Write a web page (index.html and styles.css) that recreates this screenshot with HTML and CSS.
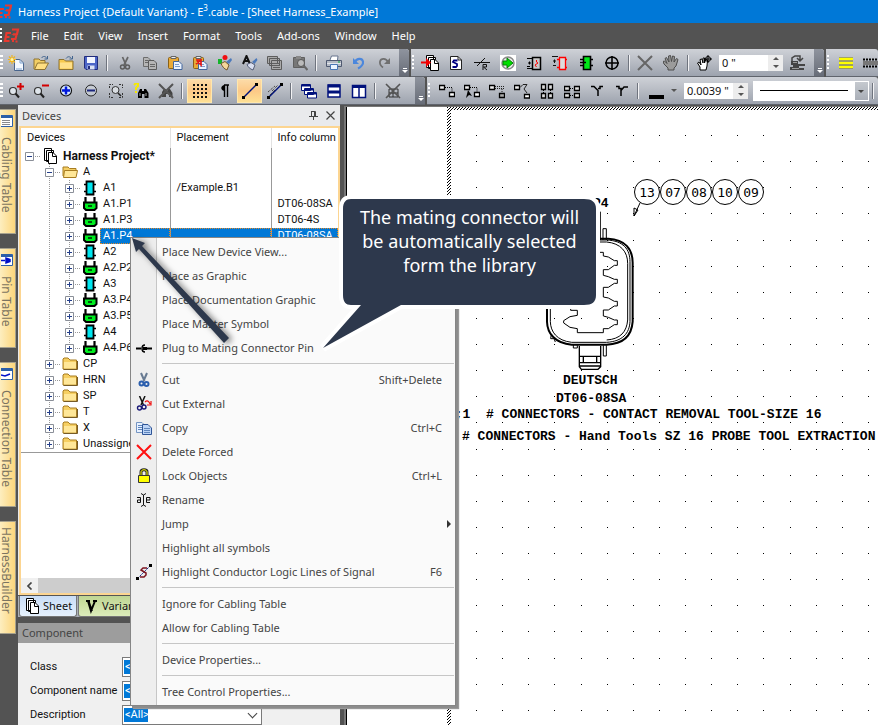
FILE: index.html
```html
<!DOCTYPE html>
<html lang="en">
<head>
<meta charset="utf-8">
<title>Harness Project - E3.cable</title>
<link rel="stylesheet" href="styles.css">
</head>
<body>
<svg class="sprite" aria-hidden="true">
  <symbol id="logo" viewBox="0 0 18 16"><path d="M8 5H3.500L2 13H6.500M3 9H6.500" fill="none" stroke="#e8392f" stroke-width="2.200"/><path d="M9 1.500H15L14 6L12 6.500L13.500 7L12.500 11H8M10 6.300H13" fill="none" stroke="#e8392f" stroke-width="2.200"/><path d="M9 13H11M12.500 13.500H14.500" stroke="#e8392f" stroke-width="2"/></symbol>
  <symbol id="new" viewBox="0 0 16 16"><path d="M6.500 4.500H12L15.500 8V15.500H6.500Z" fill="#f4f9ff" stroke="#48648c"/><path d="M12 4.500V8H15.500M8 14H14" fill="none" stroke="#7ea3cf"/><path d="M4 0V9M0 4.500H8M1 1.500L7 7.500M7 1.500L1 7.500" stroke="#f0b51e" stroke-width="1.200"/><circle cx="4" cy="4.500" r="1.500" fill="#fff6a5"/></symbol>
  <symbol id="open" viewBox="0 0 16 16"><path d="M1 14V4H6L7.500 5.500H12V8" fill="#f3cf65" stroke="#8d7232"/><path d="M1.500 14.500L4.500 8H15.500L12 14.500Z" fill="#ffdf82" stroke="#8d7232"/><path d="M8.500 3C10 .800 12.500 1 14 3.500M14.500 1V4H11.500" fill="none" stroke="#42648e"/></symbol>
  <symbol id="close" viewBox="0 0 16 16"><path d="M1 14.500V4.500H6L7.500 6H15V14.500Z" fill="#f6c94f" stroke="#8d7232"/><path d="M2 7.500H14V13.500H2Z" fill="#ffe08a"/><path d="M8 3.500C10 .800 12 1.500 13.500 3.500M14.500 1V4H11.500" fill="none" stroke="#42648e"/></symbol>
  <symbol id="save" viewBox="0 0 16 16"><path d="M1.500 1.500H14.500V14.500H3L1.500 13Z" fill="#4d66c8" stroke="#222d7c"/><path d="M4 2H12V8H4Z" fill="#f3f6ff"/><path d="M4.500 10.500H11.500V14.500H4.500Z" fill="#dce2f4"/><path d="M6 11V14" stroke="#222d7c" stroke-width="2"/></symbol>
  <symbol id="cutg" viewBox="0 0 16 16"><path d="M5.500 2L9 10M11 2L7 10" stroke="#666" stroke-width="1.700"/><circle cx="5.500" cy="12" r="2" fill="none" stroke="#5c5c5c" stroke-width="1.500"/><circle cx="10.500" cy="12" r="2" fill="none" stroke="#5c5c5c" stroke-width="1.500"/></symbol>
  <symbol id="cut" viewBox="0 0 16 16"><path d="M5 1L8.500 9M11 1L7.500 9" stroke="#687b92" stroke-width="2"/><circle cx="5.500" cy="11.500" r="2" fill="none" stroke="#2b5fae" stroke-width="2"/><circle cx="10.500" cy="12" r="2" fill="none" stroke="#2b5fae" stroke-width="2"/></symbol>
  <symbol id="cutx" viewBox="0 0 16 16"><path d="M3.500 0L7.500 9M9 0L5 9" stroke="#111" stroke-width="1.500"/><circle cx="3.500" cy="12" r="2" fill="none" stroke="#181877" stroke-width="1.400"/><circle cx="8" cy="11" r="2" fill="none" stroke="#181877" stroke-width="1.400"/><path d="M9 6C11 4 13 5 14 8M15 5V9H11" fill="none" stroke="#f01212" stroke-width="1.200"/></symbol>
  <symbol id="copyg" viewBox="0 0 16 16"><path d="M1.500 2.500H6L8.500 5V11.500H1.500Z" fill="#b5b5b5" stroke="#6d6d6d"/><path d="M6.500 5.500H12L14.500 8V14.500H6.500Z" fill="#b5b5b5" stroke="#5a5a5a"/><path d="M3 5.500H6M3 7.500H6M8 9.500H13M8 11.500H13" stroke="#666"/></symbol>
  <symbol id="copy" viewBox="0 0 16 16"><path d="M.500 2.500H6L8.500 5V12.500H.500Z" fill="#e7f1ff" stroke="#7595c3"/><path d="M6.500 4.500H12L15.500 8V14.500H6.500Z" fill="#bcd4f6" stroke="#2f5597"/><path d="M2 5.500H6M2 7.500H6M2 9.500H6M8 8.500H14M8 10.500H14M8 12.500H14" stroke="#5f86bd"/></symbol>
  <symbol id="paste" viewBox="0 0 16 16"><rect x="1.500" y="2.500" width="10" height="11" rx="1" fill="#e9a936" stroke="#8a6115"/><path d="M4 3.500V1.500H9V3.500Z" fill="#eee" stroke="#666"/><path d="M6.500 6.500H12L15 9.500V14.500H6.500Z" fill="#eaf3ff" stroke="#42659c"/><path d="M8 9.500H12M8 11.500H13" stroke="#7f9cc9"/></symbol>
  <symbol id="pastex" viewBox="0 0 16 16"><use href="#paste"/><path d="M4 5H9M9 4V10L5 6M4 9L9 5" stroke="#e01818" stroke-width="1.700" fill="none"/></symbol>
  <symbol id="brush" viewBox="0 0 16 16"><circle cx="8" cy="2.500" r="2.500" fill="#f01010"/><path d="M1 4H5V9H1Z" fill="#14b52b"/><path d="M9 7L14 3L15 5L12 9Z" fill="#4c79bb"/><path d="M5 8L8 6.500L12 10L10 15C7 14 5 11 4 8.500Z" fill="#f4d79b" stroke="#72582c"/></symbol>
  <symbol id="abrush" viewBox="0 0 16 16"><path d="M1 9L4.500 1L8 9M2.500 6H7" fill="none" stroke="#111" stroke-width="2"/><path d="M10 7L14.500 3L15.500 5L12.500 9Z" fill="#4c79bb"/><path d="M6 9L9 7.500L13 10L11 15C8 14 6 12 5 9.500Z" fill="#d9dff0" stroke="#555e78"/></symbol>
  <symbol id="stack" viewBox="0 0 16 16"><path d="M.500 1.500H10.500V8.500H.500ZM2.500 3.500H12.500V10.500H2.500ZM4.500 5.500H14.500V14.500H4.500Z" fill="#aaa" stroke="#5c5c5c"/><path d="M6 8.500H13M6 10.500H13M6 12.500H13" stroke="#606060"/></symbol>
  <symbol id="camera" viewBox="0 0 16 16"><path d="M1.500 2.500H12.500V12.500H1.500Z" fill="#777" stroke="#606060"/><path d="M4 1H9V4H4Z" fill="#888"/><circle cx="9" cy="8" r="3.500" fill="#bbb" stroke="#555"/><path d="M12 11L15.500 15" stroke="#666" stroke-width="2"/></symbol>
  <symbol id="print" viewBox="0 0 16 16"><path d="M4 5L5.500 1H12L11.500 5" fill="#fff" stroke="#67758e"/><path d="M.500 5.500H15.500V11.500H.500Z" fill="#b4bac4" stroke="#4d5870"/><path d="M1 8.500H15" stroke="#e4e7ec"/><path d="M4.500 9.500H11.500V14.500H4.500Z" fill="#eaf4ff" stroke="#4977b5"/><path d="M12 7H14" stroke="#00a436"/></symbol>
  <symbol id="undo" viewBox="0 0 16 16"><path d="M4 7C6 3 11 3 12 6.500C12.500 9 10 12 7 13.500" fill="none" stroke="#4c87dc" stroke-width="2.200"/><path d="M2 3V9H8Z" fill="#4c87dc"/></symbol>
  <symbol id="redo" viewBox="0 0 16 16"><path d="M12 7C10 3 5 3 4 6.500C3.500 9 5 11 7 12.500" fill="none" stroke="#707070" stroke-width="1.800"/><path d="M14 3V9H8Z" fill="#707070"/></symbol>
  <symbol id="sheets" viewBox="0 0 16 16"><path d="M2.500 .500H9.500V12.500H2.500ZM4.500 2.500H11.500V13.500H4.500Z" fill="#fff" stroke="#000"/><path d="M6.500 4.500H11L14.500 8V15.500H6.500Z" fill="#fff" stroke="#000"/><path d="M10.500 5V8.500H14" fill="none" stroke="#000"/></symbol>
  <symbol id="insheet" viewBox="0 0 18 16"><path d="M5.500 .500H12.500V12.500H5.500ZM7.500 2.500H14.500V13.500H7.500Z" fill="#fff" stroke="#000"/><path d="M9.500 4.500H14L17.500 8V15.500H9.500Z" fill="#fff" stroke="#000"/><path d="M13.500 5V8.500H17" fill="none" stroke="#000"/><path d="M0 6.500H5V3L10 7.500L5 12V8.500H0Z" fill="#f00000"/></symbol>
  <symbol id="spage" viewBox="0 0 16 16"><path d="M2.500 1.500H10L13.500 5V14.500H2.500Z" fill="#fff" stroke="#222"/><path d="M10 1.500V5H13.500" fill="none" stroke="#222"/><path d="M9.500 5.500H6L5 7L9 9V11L8 12H4.500" fill="none" stroke="#000080" stroke-width="1.800"/></symbol>
  <symbol id="slash" viewBox="0 0 16 16"><path d="M0 7.500H16M3 11L11 3M9 15V9.500H12.500V12H9.500L13 15" fill="none" stroke="#111"/></symbol>
  <symbol id="goto" viewBox="0 0 16 16"><path d="M0 0H16V16H0Z" fill="#fff"/><circle cx="8" cy="8" r="6" fill="#eee" stroke="#8b8b8b" stroke-width="1.500"/><path d="M3 6H7V3L13 8L7 13V10H3Z" fill="#00df00" stroke="#078007"/></symbol>
  <symbol id="devk" viewBox="0 0 16 16"><path d="M6.500 2.500H14.500V14.500H6.500Z" fill="#c8c8c8" stroke="#000" stroke-width="1.500"/><path d="M1 3.500H6M1 13.500H6M2 8H5M3.500 6.500V9.500M1 11.500H4" stroke="#000"/><path d="M10.500 5V7L12 8L9 10L10.500 12" fill="none" stroke="#f00"/></symbol>
  <symbol id="devr" viewBox="0 0 16 16"><path d="M7.500 2.500H13.500V14.500H7.500ZM5 4.500H8M13 4.500H15M5 12.500H8M13 12.500H15" fill="#ddd" stroke="#f00" stroke-width="1.300"/><path d="M0 1.500H6M1 6H4M2.500 4.500V8M1 10.500H4" stroke="#111"/></symbol>
  <symbol id="devg" viewBox="0 0 16 16"><path d="M5.500 1.500H12.500V14.500H5.500Z" fill="#00e719" stroke="#000" stroke-width="1.600"/><path d="M2 4.500H5M2 10.500H5M13 4.500H15M13 10.500H15M2 7.500H8" stroke="#000" stroke-width="1.400"/></symbol>
  <symbol id="target" viewBox="0 0 16 16"><circle cx="8" cy="8" r="6" fill="none" stroke="#000" stroke-width="1.500"/><path d="M8 1V15M1 8H15" stroke="#000" stroke-width="1.600"/></symbol>
  <symbol id="xg" viewBox="0 0 16 16"><path d="M1 1L15 15M15 1L1 15" stroke="#666" stroke-width="2"/></symbol>
  <symbol id="xr" viewBox="0 0 16 16"><path d="M1 1L15 15M15 1L1 15" stroke="#ff1010" stroke-width="2"/></symbol>
  <symbol id="hand" viewBox="0 0 16 16"><path d="M5 15V13L1 9L0 6.500L1.500 6L4 8.500L2 3.500L3.500 2.500L6 7L5.500 1L7.500 .500L8.500 6.500L9.500 1L11.500 1.500L11 7L13.500 3.500L15 4.500L13 11L11 13V15Z" fill="currentColor" stroke="#4c4c4c"/></symbol>
  <symbol id="handt" viewBox="0 0 16 16"><path d="M4 15V12L1.500 8L3 7L5 10L4 4.500L6 4L7 8V3H8.500V8L10 4L11.500 5L11 11L10 15Z" fill="#fff" stroke="#000"/><circle cx="12" cy="4" r="2.500" fill="none" stroke="#000"/><path d="M12 0V8M8 4H16" stroke="#000"/></symbol>
  <symbol id="rotate" viewBox="0 0 16 16"><path d="M3 6V3L6 1H11V5M8 3L11 6L14 3" fill="none" stroke="#444" stroke-width="1.500"/><path d="M2 6H9V9H16V11H10V13H15V15H1V12H4V10H2Z" fill="#444"/><path d="M3 13.500H10M4 7.500H8" stroke="#999"/></symbol>
  <symbol id="ylines" viewBox="0 0 16 16"><path d="M1 4H15M1 8H15M1 12H15" stroke="#858500" stroke-width="3"/><path d="M1 4H15M1 8H15M1 12H15" stroke="#ffff00" stroke-width="2"/></symbol>
  <symbol id="dashes" viewBox="0 0 16 16"><path d="M0 4.500H16M0 11.500H16" stroke="#000" stroke-width="2" stroke-dasharray="2 1"/><path d="M0 8H16" stroke="#777" stroke-width="4"/></symbol>
  <symbol id="zin" viewBox="0 0 16 16"><circle cx="5" cy="8" r="3.500" fill="#dfe5eb" stroke="#333" stroke-width="1.200"/><path d="M7.500 10.500L11 14.500" stroke="#222" stroke-width="2"/><path d="M9 3.500H16M12.500 0V7" stroke="#d30000" stroke-width="2"/></symbol>
  <symbol id="zout" viewBox="0 0 16 16"><circle cx="5" cy="8" r="3.500" fill="#dfe5eb" stroke="#333" stroke-width="1.200"/><path d="M7.500 10.500L11 14.500" stroke="#222" stroke-width="2"/><path d="M9 2.500H16" stroke="#d30000" stroke-width="2"/></symbol>
  <symbol id="plusc" viewBox="0 0 16 16"><circle cx="8" cy="7.500" r="5.500" fill="#d7e8ff" stroke="#111" stroke-width="1.200"/><path d="M8 3.500V11.500M4 7.500H12" stroke="#0018da" stroke-width="2.500"/></symbol>
  <symbol id="minusc" viewBox="0 0 16 16"><circle cx="8" cy="7.500" r="5.500" fill="#c6cbd2" stroke="#222"/><path d="M4 7.500H12" stroke="#1b267d" stroke-width="2"/></symbol>
  <symbol id="zarea" viewBox="0 0 16 16"><path d="M1.500 5V1.500H5M11 1.500H14.500V5M14.500 10V14.500H11M5 14.500H1.500V10" fill="none" stroke="#333" stroke-dasharray="2 1"/><circle cx="7.500" cy="7" r="3.500" fill="#d8dce1" stroke="#333"/><path d="M10 10L13 13" stroke="#222" stroke-width="1.500"/></symbol>
  <symbol id="find" viewBox="0 0 16 16"><path d="M1 2L2.500 .500H5V3L3 5V7M3 8V10" fill="none" stroke="#f5e900" stroke-width="2"/><path d="M5 15V10L7 6H9V8H11V6H13L15.500 10V15H11.500V11H9V15Z" fill="#000"/><path d="M7 10V13M13 10V13" stroke="#aaa"/></symbol>
  <symbol id="findx" viewBox="0 0 16 16"><path d="M4 14V9L6 6H8V8H10V6H12L14.500 10V14H11V11H8V14Z" fill="#444"/><path d="M1 1L15 15M15 1L1 15" stroke="#555" stroke-width="2"/></symbol>
  <symbol id="grid" viewBox="0 0 16 16"><path d="M1 2H15M1 6H15M1 10H15M1 14H15" stroke="#111" stroke-width="2" stroke-dasharray="2 2"/></symbol>
  <symbol id="para" viewBox="0 0 16 16"><path d="M7 2H12M7.500 2V14M10.500 2V14" fill="none" stroke="#000" stroke-width="1.400"/><path d="M8 2V8C3 8 3 2 8 2Z"/></symbol>
  <symbol id="line" viewBox="0 0 16 16"><path d="M2 14L14 2" stroke="#00117c" stroke-width="1.400"/><path d="M0 13H3V16H0ZM13 0H16V3H13Z"/></symbol>
  <symbol id="line2" viewBox="0 0 16 16"><path d="M2 14L14 2" stroke="#00117c" stroke-width="1.400"/><path d="M1 9L8 3M5 8L11 2M3 12L8 7" stroke="#222" stroke-dasharray="1 1"/><path d="M0 13H3V16H0ZM13 0H16V3H13Z"/></symbol>
  <symbol id="cascade" viewBox="0 0 16 16"><path d="M.500 1.500H9.500V7.500H.500ZM3.500 5.500H12.500V11.500H3.500ZM6.500 9.500H15.500V15H6.500Z" fill="#fff" stroke="#00117c"/><path d="M1 2.500H9M4 6.500H12M7 10.500H15" stroke="#00117c" stroke-width="2"/></symbol>
  <symbol id="horiz" viewBox="0 0 16 16"><path d="M2 2H14V14H2Z" fill="#fff" stroke="#00117c" stroke-width="1.500"/><path d="M2 3H14M2 9H14" stroke="#00117c" stroke-width="3"/></symbol>
  <symbol id="vert" viewBox="0 0 16 16"><path d="M1.500 2.500H14.500V14.500H1.500ZM8 3V14" fill="#fff" stroke="#00117c" stroke-width="1.500"/><path d="M1 3.500H15" stroke="#00117c" stroke-width="3"/></symbol>
  <symbol id="tableX" viewBox="0 0 16 16"><path d="M4 6H13V14H4ZM4 10H13M8 6V14" fill="none" stroke="#333"/><path d="M1 1L15 15M15 1L1 15" stroke="#555" stroke-width="1.600"/></symbol>
  <symbol id="route1" viewBox="0 0 16 16"><path d="M.500 2.500H5.500V6.500H.500Z" fill="#eee" stroke="#000" stroke-width="1.300"/><path d="M6 4.500H13V9" fill="none" stroke="#000" stroke-dasharray="1 1"/><path d="M10.500 9.500H15.500V13.500H10.500Z" fill="#fff" stroke="#000" stroke-width="1.300"/></symbol>
  <symbol id="route2" viewBox="0 0 16 16"><use href="#route1"/><path d="M2 15L4 7L8 13L5 12Z"/></symbol>
  <symbol id="route3" viewBox="0 0 16 16"><path d="M.500 2.500H5.500V6.500H.500Z" fill="#eee" stroke="#000" stroke-width="1.300"/><path d="M6 3.500H15M6 5.500H15M13 6V10" fill="none" stroke="#222" stroke-dasharray="1 1"/><path d="M10.500 10.500H15.500V14.500H10.500Z" fill="#aaa" stroke="#000" stroke-width="1.300"/></symbol>
  <symbol id="route4" viewBox="0 0 16 16"><path d="M.500 2.500H5.500V6.500H.500Z" fill="#eee" stroke="#000" stroke-width="1.300"/><path d="M6 4.500L9 1.500H13L10 6L13 10" fill="none" stroke="#222"/><path d="M10.500 11.500H15.500V15H10.500Z" fill="#fff" stroke="#000" stroke-width="1.300"/></symbol>
  <symbol id="pairv" viewBox="0 0 16 16"><path d="M2.500 1.500H6.500V6.500H2.500ZM9.500 1.500H13.500V6.500H9.500ZM2.500 10.500H6.500V15H2.500ZM9.500 10.500H13.500V15H9.500Z" fill="#ddd" stroke="#000" stroke-width="1.300"/><path d="M4.500 7V10M11.500 7V10" stroke="#000" stroke-dasharray="1 1"/></symbol>
  <symbol id="pairh" viewBox="0 0 16 16"><path d="M.500 3.500H5.500V7.500H.500ZM10.500 3.500H15.500V7.500H10.500ZM.500 10.500H5.500V14.500H.500ZM10.500 10.500H15.500V14.500H10.500Z" fill="#ddd" stroke="#000" stroke-width="1.300"/><path d="M6 5.500H10M6 12.500H10" stroke="#000" stroke-dasharray="1 1"/></symbol>
  <symbol id="teel" viewBox="0 0 16 16"><path d="M2 3.500H5L9 7.500V13M9 5.500H11V3.500H14" fill="none" stroke="#000" stroke-width="1.500"/></symbol>
  <symbol id="teer" viewBox="0 0 16 16"><path d="M2 3.500H5V5.500H7V13M7 7.500L10 4H14" fill="none" stroke="#000" stroke-width="1.500"/></symbol>
  <symbol id="penw" viewBox="0 0 16 16"><path d="M1 12H16V16H1Z"/></symbol>
  <symbol id="folder" viewBox="0 0 16 16"><path d="M1 13V3L2 2H6L8 4H14.500V13Z" fill="#f6cf62" stroke="#a77c21"/><path d="M2 6H14V12.500H2Z" fill="#ffe798"/><path d="M1.500 13.500H15.500V5" fill="none" stroke="#765b26"/></symbol>
  <symbol id="folderopen" viewBox="0 0 16 16"><path d="M1 12V3H6L7.500 4.500H14V12" fill="#f5cf65" stroke="#a77c21"/><path d="M1.500 13.500L2.500 6.500H15.500L14 13.500Z" fill="#ffe798" stroke="#a77c21"/></symbol>
  <symbol id="dev" viewBox="0 0 16 16"><path d="M4.500 1.500H11.500V14.500H4.500Z" fill="#00e6f0" stroke="#000" stroke-width="1.800"/><path d="M2 4.500H5M2 11.500H5M11 4.500H14M11 11.500H14" stroke="#000" stroke-width="1.500"/></symbol>
  <symbol id="conn" viewBox="0 0 16 16"><path d="M3.500 1V6M12.500 1V6" stroke="#000" stroke-width="2.200"/><path d="M2 6.500H14.500V12L12.500 14H4L2 12Z" fill="#00ed20" stroke="#000" stroke-width="2"/><path d="M6 10H10" stroke="#000" stroke-width="1.300"/></symbol>
  <symbol id="plus" viewBox="0 0 9 9"><path d="M.500 .500H8.500V8.500H.500Z" fill="#fff" stroke="#8a8f98"/><path d="M2 4.500H7M4.500 2V7" stroke="#243f8b"/></symbol>
  <symbol id="minus" viewBox="0 0 9 9"><path d="M.500 .500H8.500V8.500H.500Z" fill="#fff" stroke="#8a8f98"/><path d="M2 4.500H7" stroke="#243f8b"/></symbol>
  <symbol id="plug" viewBox="0 0 16 16"><path d="M0 8.500H5M9 8.500H16" stroke="#000" stroke-width="2"/><path d="M9 5C5 5 5 12 9 12" fill="none" stroke="#000" stroke-width="1.500"/><path d="M7 7H11V10H7Z"/></symbol>
  <symbol id="lock" viewBox="0 0 16 16"><path d="M5 8V4C5 1 11 1 11 4V8" fill="none" stroke="#222" stroke-width="3"/><path d="M5 8V4C5 1 11 1 11 4V8" fill="none" stroke="#ffff00" stroke-width="1"/><path d="M2.500 7.500H13.500V14.500H2.500Z" fill="#ffff00" stroke="#333"/></symbol>
  <symbol id="rename" viewBox="0 0 16 16"><path d="M1 5.500H4.500V10.500H1.500V8H4.500M10.500 8H14V5.500H10.500V10.500H14" fill="none" stroke="#111"/><path d="M5 1.500L7.500 3L10 1.500M5 14.500L7.500 13L10 14.500M7.500 3V13" fill="none" stroke="#111"/></symbol>
  <symbol id="signal" viewBox="0 0 16 16"><path d="M2 14L14 2" stroke="#00117c" stroke-dasharray="2 1"/><path d="M11 4H7L5 6L10 9V11L8 13H4" fill="none" stroke="#7c1520" stroke-width="1.500"/><path d="M0 13H3V16H0ZM13 0H16V3H13Z"/></symbol>
  <symbol id="listwin" viewBox="0 0 12 12"><path d="M-2 .500H11.500V11.500H-2Z" fill="#fff" stroke="#2c5fa8"/><path d="M0 2H11" stroke="#2c5fa8" stroke-width="2"/><path d="M1 5.500H9M1 7.500H9M1 9.500H9" stroke="#87898d"/></symbol>
  <symbol id="pinwin" viewBox="0 0 12 12"><path d="M-2 .500H11.500V11.500H-2Z" fill="#fff" stroke="#2c5fa8"/><path d="M0 2H11" stroke="#2c5fa8" stroke-width="2"/><path d="M0 6.500H4M5 4V9L9 7.500V5.500Z" fill="#0010c8" stroke="#0010c8" stroke-width="1.500"/></symbol>
  <symbol id="conwin" viewBox="0 0 12 12"><path d="M-2 .500H11.500V11.500H-2Z" fill="#fff" stroke="#2c5fa8"/><path d="M0 2H11" stroke="#2c5fa8" stroke-width="2"/><path d="M0 7L4 8L9 6" fill="none" stroke="#0010c8" stroke-width="1.500"/></symbol>
</svg>

<header class="titlebar"><svg class="logo"><use href="#logo"/></svg><h1>Harness Project {Default Variant} - E<sup>3</sup>.cable - [Sheet Harness_Example]</h1></header>

<nav class="menubar">
  <i class="grip"></i><svg class="logo"><use href="#logo"/></svg>
  <button>File</button><button>Edit</button><button>View</button><button>Insert</button><button>Format</button><button>Tools</button><button>Add-ons</button><button>Window</button><button>Help</button>
</nav>

<div class="toolrow">
  <div class="toolbar main">
    <i class="grip"></i>
    <button aria-label="New"><svg><use href="#new"/></svg></button>
    <button aria-label="Open"><svg><use href="#open"/></svg></button>
    <button aria-label="Close"><svg><use href="#close"/></svg></button>
    <button aria-label="Save"><svg><use href="#save"/></svg></button>
    <i class="sep"></i>
    <button aria-label="Cut"><svg><use href="#cutg"/></svg></button>
    <button aria-label="Copy"><svg><use href="#copyg"/></svg></button>
    <button aria-label="Paste"><svg><use href="#paste"/></svg></button>
    <button aria-label="Paste special"><svg><use href="#pastex"/></svg></button>
    <button aria-label="Format painter"><svg><use href="#brush"/></svg></button>
    <button aria-label="Text painter"><svg><use href="#abrush"/></svg></button>
    <button aria-label="Copy sheets"><svg><use href="#stack"/></svg></button>
    <button aria-label="Snapshot"><svg><use href="#camera"/></svg></button>
    <i class="sep"></i>
    <button aria-label="Print"><svg><use href="#print"/></svg></button>
    <button aria-label="Undo"><svg><use href="#undo"/></svg></button>
    <button aria-label="Redo"><svg><use href="#redo"/></svg></button>
    <button class="more" aria-label="Toolbar options"></button>
  </div>
  <div class="toolbar insert">
    <i class="grip"></i>
    <button aria-label="Insert sheet"><svg class="wide"><use href="#insheet"/></svg></button>
    <button aria-label="Symbol"><svg><use href="#spage"/></svg></button>
    <button aria-label="Connection"><svg><use href="#slash"/></svg></button>
    <button aria-label="Go to"><svg><use href="#goto"/></svg></button>
    <button aria-label="Device"><svg><use href="#devk"/></svg></button>
    <button aria-label="Device block"><svg><use href="#devr"/></svg></button>
    <button aria-label="Place device"><svg><use href="#devg"/></svg></button>
    <button aria-label="Target"><svg><use href="#target"/></svg></button>
    <i class="sep"></i>
    <button aria-label="Delete"><svg><use href="#xg"/></svg></button>
    <button class="grey" aria-label="Pan"><svg><use href="#hand"/></svg></button>
    <i class="sep"></i>
    <button aria-label="Move"><svg><use href="#handt"/></svg></button>
    <span class="spin"><input aria-label="Angle" value="0 &quot;"><span class="steps"><button aria-label="Increase angle"></button><button class="down" aria-label="Decrease angle"></button></span></span>
    <button aria-label="Rotate"><svg><use href="#rotate"/></svg></button>
    <button class="more" aria-label="Toolbar options"></button>
  </div>
  <div class="toolbar rest">
    <i class="grip"></i>
    <button aria-label="Wires"><svg><use href="#ylines"/></svg></button>
    <button aria-label="Cable"><svg><use href="#dashes"/></svg></button>
  </div>
</div>

<div class="toolrow">
  <div class="toolbar view">
    <i class="grip"></i>
    <button aria-label="Zoom in"><svg><use href="#zin"/></svg></button>
    <button aria-label="Zoom out"><svg><use href="#zout"/></svg></button>
    <button aria-label="Enlarge"><svg><use href="#plusc"/></svg></button>
    <button aria-label="Reduce"><svg><use href="#minusc"/></svg></button>
    <button aria-label="Zoom area"><svg><use href="#zarea"/></svg></button>
    <button aria-label="Find"><svg><use href="#find"/></svg></button>
    <button aria-label="Clear find"><svg><use href="#findx"/></svg></button>
    <i class="sep"></i>
    <button class="on" aria-label="Grid"><svg><use href="#grid"/></svg></button>
    <button aria-label="Marks"><svg><use href="#para"/></svg></button>
    <button class="on" aria-label="Line"><svg><use href="#line"/></svg></button>
    <button aria-label="Multiple lines"><svg><use href="#line2"/></svg></button>
    <i class="sep"></i>
    <button aria-label="Cascade"><svg><use href="#cascade"/></svg></button>
    <button aria-label="Tile rows"><svg><use href="#horiz"/></svg></button>
    <button aria-label="Tile columns"><svg><use href="#vert"/></svg></button>
    <i class="sep"></i>
    <button aria-label="Remove table"><svg><use href="#tableX"/></svg></button>
    <button class="more" aria-label="Toolbar options"></button>
  </div>
  <div class="toolbar rest">
    <i class="grip"></i>
    <button aria-label="Route"><svg><use href="#route1"/></svg></button>
    <button aria-label="Pick route"><svg><use href="#route2"/></svg></button>
    <button aria-label="Bundle route"><svg><use href="#route3"/></svg></button>
    <button aria-label="Curve route"><svg><use href="#route4"/></svg></button>
    <button aria-label="Vertical pairs"><svg><use href="#pairv"/></svg></button>
    <button aria-label="Horizontal pairs"><svg><use href="#pairh"/></svg></button>
    <button aria-label="Left tee"><svg><use href="#teel"/></svg></button>
    <button aria-label="Right tee"><svg><use href="#teer"/></svg></button>
    <i class="sep"></i>
    <button aria-label="Pen colour"><svg><use href="#penw"/></svg></button>
    <button class="caret" aria-label="Pen colours"></button>
    <span class="spin"><input aria-label="Line width" value="0.0039 &quot;"><span class="steps"><button aria-label="Increase width"></button><button class="down" aria-label="Decrease width"></button></span></span>
    <span class="linepick"><select aria-label="Line style"><option></option></select></span>
    <i class="sep"></i>
  </div>
</div>

<main>
  <div class="sidetabs">
    <button class="cabling"><svg><use href="#listwin"/></svg>Cabling Table</button>
    <button class="pin"><svg><use href="#pinwin"/></svg>Pin Table</button>
    <button class="connection"><svg><use href="#conwin"/></svg>Connection Table</button>
    <button class="builder">HarnessBuilder</button>
  </div>

  <div class="docks">
    <section class="devices">
      <header class="dockhead"><h2>Devices</h2>
        <button aria-label="Pin panel"><svg viewBox="0 0 9 9"><path d="M2.500 0V5.500M2 .500H6.500V5.500M5.500 0V5M0 5.500H9M4.500 6V9" fill="none" stroke="#444"/></svg></button>
        <button aria-label="Close panel"><svg viewBox="0 0 9 9"><path d="M.500 .500L8.500 8.500M8.500 .500L.500 8.500" stroke="#444" stroke-width="1.200"/></svg></button>
      </header>
      <div class="treebox">
        <table>
          <thead><tr><th class="c1">Devices</th><th class="c2">Placement</th><th>Info column</th></tr></thead>
          <tbody>
            <tr><td><div class="node l0"><svg class="ex"><use href="#minus"/></svg><svg class="ic"><use href="#sheets"/></svg><b>Harness Project*</b></div></td><td></td><td></td></tr>
            <tr><td><div class="node l1 top"><svg class="ex"><use href="#minus"/></svg><svg class="ic"><use href="#folderopen"/></svg><span>A</span></div></td><td></td><td></td></tr>
            <tr><td><div class="node l2"><svg class="ex"><use href="#plus"/></svg><svg class="ic"><use href="#dev"/></svg><span>A1</span></div></td><td>/Example.B1</td><td></td></tr>
            <tr><td><div class="node l2"><svg class="ex"><use href="#plus"/></svg><svg class="ic"><use href="#conn"/></svg><span>A1.P1</span></div></td><td></td><td>DT06-08SA</td></tr>
            <tr><td><div class="node l2"><svg class="ex"><use href="#plus"/></svg><svg class="ic"><use href="#conn"/></svg><span>A1.P3</span></div></td><td></td><td>DT06-4S</td></tr>
            <tr class="selected"><td><div class="node l2"><svg class="ex"><use href="#plus"/></svg><svg class="ic"><use href="#conn"/></svg><span>A1.P4</span></div></td><td></td><td>DT06-08SA</td></tr>
            <tr><td><div class="node l2"><svg class="ex"><use href="#plus"/></svg><svg class="ic"><use href="#dev"/></svg><span>A2</span></div></td><td></td><td></td></tr>
            <tr><td><div class="node l2"><svg class="ex"><use href="#plus"/></svg><svg class="ic"><use href="#conn"/></svg><span>A2.P2</span></div></td><td></td><td></td></tr>
            <tr><td><div class="node l2"><svg class="ex"><use href="#plus"/></svg><svg class="ic"><use href="#dev"/></svg><span>A3</span></div></td><td></td><td></td></tr>
            <tr><td><div class="node l2"><svg class="ex"><use href="#plus"/></svg><svg class="ic"><use href="#conn"/></svg><span>A3.P4</span></div></td><td></td><td></td></tr>
            <tr><td><div class="node l2"><svg class="ex"><use href="#plus"/></svg><svg class="ic"><use href="#conn"/></svg><span>A3.P5</span></div></td><td></td><td></td></tr>
            <tr><td><div class="node l2"><svg class="ex"><use href="#plus"/></svg><svg class="ic"><use href="#dev"/></svg><span>A4</span></div></td><td></td><td></td></tr>
            <tr><td><div class="node l2 last"><svg class="ex"><use href="#plus"/></svg><svg class="ic"><use href="#conn"/></svg><span>A4.P6</span></div></td><td></td><td></td></tr>
            <tr><td><div class="node l1"><svg class="ex"><use href="#plus"/></svg><svg class="ic"><use href="#folder"/></svg><span>CP</span></div></td><td></td><td></td></tr>
            <tr><td><div class="node l1"><svg class="ex"><use href="#plus"/></svg><svg class="ic"><use href="#folder"/></svg><span>HRN</span></div></td><td></td><td></td></tr>
            <tr><td><div class="node l1"><svg class="ex"><use href="#plus"/></svg><svg class="ic"><use href="#folder"/></svg><span>SP</span></div></td><td></td><td></td></tr>
            <tr><td><div class="node l1"><svg class="ex"><use href="#plus"/></svg><svg class="ic"><use href="#folder"/></svg><span>T</span></div></td><td></td><td></td></tr>
            <tr><td><div class="node l1"><svg class="ex"><use href="#plus"/></svg><svg class="ic"><use href="#folder"/></svg><span>X</span></div></td><td></td><td></td></tr>
            <tr><td><div class="node l1 last"><svg class="ex"><use href="#plus"/></svg><svg class="ic"><use href="#folder"/></svg><span>Unassigned</span></div></td><td></td><td></td></tr>
          </tbody>
        </table>
        <div class="hscroll"><button aria-label="Scroll left"><svg viewBox="0 0 7 8"><path d="M5.500 .500L2 4L5.500 7.500" fill="none" stroke="#444" stroke-width="1.700"/></svg></button><i></i></div>
      </div>
      <div class="booktabs"><button><svg><use href="#sheets"/></svg>Sheet</button><button class="variant"><svg viewBox="0 0 16 16"><path d="M3 3H7M10 3H14M5 3L8 13L12 3M5.500 3L9 13" fill="none" stroke="#000" stroke-width="2"/></svg>Variant</button></div>
    </section>
    <section class="component">
      <h2>Component</h2>
      <form>
        <label for="cls">Class</label><span class="combo"><select id="cls"><option>&lt;All&gt;</option></select></span>
        <label for="nam">Component name</label><span class="combo"><select id="nam"><option>&lt;All&gt;</option></select></span>
        <label for="dsc">Description</label><span class="combo"><select id="dsc"><option>&lt;All&gt;</option></select></span>
      </form>
    </section>
  </div>

  <section class="sheet" aria-label="Harness sheet">
    <svg class="drawing">
      <defs>
        <path id="dotrow" d="M0 .500H209" stroke="#000" stroke-dasharray="1 25 1 25 1 25 1 26 1 25 1 25 1 25 1 25"/>
        <pattern id="dots" x="476" y="135" width="209" height="209" patternUnits="userSpaceOnUse"><use href="#dotrow"/><use href="#dotrow" y="26"/><use href="#dotrow" y="52"/><use href="#dotrow" y="78"/><use href="#dotrow" y="105"/><use href="#dotrow" y="131"/><use href="#dotrow" y="157"/><use href="#dotrow" y="183"/></pattern>
        <pattern id="hatch" width="3" height="3" patternUnits="userSpaceOnUse"><path d="M0 2H1V3H0ZM1 1H2V2H1ZM2 0H3V1H2Z"/></pattern>
      </defs>
      <g transform="translate(-347 -107)">
        <g shape-rendering="crispEdges">
          <rect x="451" y="110" width="2000" height="2000" fill="url(#dots)"/>
          <path d="M447 107H2400V110H451V2000H447Z" fill="url(#hatch)"/>
        </g>
        <g fill="#fff" stroke="#000"><circle cx="647" cy="192" r="12.500"/><circle cx="673" cy="192" r="12.500"/><circle cx="699" cy="192" r="12.500"/><circle cx="725" cy="192" r="12.500"/><circle cx="751" cy="192" r="12.500"/><path d="M640 203L634 216V208L638 210L634 216" fill="none"/></g>
        <g class="balloon"><text x="647" y="197">13</text><text x="673" y="197">07</text><text x="699" y="197">08</text><text x="725" y="197">10</text><text x="751" y="197">09</text></g>
        <g transform="translate(440 220) scale(.33333)" fill="none" stroke="#000" stroke-width="3">
          <path d="M395 60H500C550 62 570 88 570 125V305C568 340 548 364 500 367H395C350 362 332 335 331 305V125C335 80 355 62 395 60Z"/>
          <path d="M395 66H500C542 70 563 95 563 130V300C560 335 542 357 500 360"/>
          <path d="M390 56H505C555 58 578 88 578 128V305C575 345 552 372 500 374H395C345 370 322 340 321 305V125" stroke-width="6"/>
          <path d="M481 -25V60M489 60V26H499V60M490 376V408H499V376M400 375V384H412V376M334 342L332 356H342L346 366"/>
          <path d="M480 97H490V108L505 111L523 122H532V136H523L505 149H490V166L505 170L523 178H532V190H523L505 202H490V231L505 234L523 244H532V258H523L505 270H490V288L505 292L523 300H532V314H523L505 326H490V338H412V326L390 322L371 309V302L390 290L412 286V271H392V262"/>
          <path d="M418 378V440L424 448H474L482 440V378M418 409H482M418 428H482M430 409V428M470 409V428M418 438H482" stroke-width="4"/>
        </g>
        <g class="cad"><text x="593" y="207">P4</text><text x="563" y="384">DEUTSCH</text><text x="556" y="402">DT06-08SA</text><text x="447" y="418">6;1  # CONNECTORS - CONTACT REMOVAL TOOL-SIZE 16</text><text x="462" y="440"># CONNECTORS - Hand Tools SZ 16 PROBE TOOL EXTRACTION</text></g>
      </g>
    </svg>
  </section>
</main>

<div class="context" role="menu">
  <button role="menuitem"><i></i><span>Place New Device View...</span></button>
  <button role="menuitem"><i></i><span>Place as Graphic</span></button>
  <button role="menuitem"><i></i><span>Place Documentation Graphic</span></button>
  <button role="menuitem"><i></i><span>Place Master Symbol</span></button>
  <button role="menuitem"><i><svg><use href="#plug"/></svg></i><span>Plug to Mating Connector Pin</span></button>
  <hr>
  <button role="menuitem"><i><svg><use href="#cut"/></svg></i><span>Cut</span><kbd>Shift+Delete</kbd></button>
  <button role="menuitem"><i><svg><use href="#cutx"/></svg></i><span>Cut External</span></button>
  <button role="menuitem"><i><svg><use href="#copy"/></svg></i><span>Copy</span><kbd>Ctrl+C</kbd></button>
  <button role="menuitem"><i><svg><use href="#xr"/></svg></i><span>Delete Forced</span></button>
  <button role="menuitem"><i><svg><use href="#lock"/></svg></i><span>Lock Objects</span><kbd>Ctrl+L</kbd></button>
  <button role="menuitem"><i><svg><use href="#rename"/></svg></i><span>Rename</span></button>
  <button role="menuitem" class="sub"><i></i><span>Jump</span></button>
  <button role="menuitem"><i></i><span>Highlight all symbols</span></button>
  <button role="menuitem"><i><svg><use href="#signal"/></svg></i><span>Highlight Conductor Logic Lines of Signal</span><kbd>F6</kbd></button>
  <hr>
  <button role="menuitem"><i></i><span>Ignore for Cabling Table</span></button>
  <button role="menuitem"><i></i><span>Allow for Cabling Table</span></button>
  <hr>
  <button role="menuitem"><i></i><span>Device Properties...</span></button>
  <hr>
  <button role="menuitem"><i></i><span>Tree Control Properties...</span></button>
</div>

<svg class="pointer" viewBox="0 0 110 120" aria-hidden="true"><path d="M2 2L15 7L12 10L99 102L94 107L9 13L6 16Z" fill="#2d384c"/></svg>

<aside class="callout">
  <svg viewBox="0 0 284 162" aria-hidden="true"><path d="M34 6H267C275 6 279 9 279 16V102C279 109 275 112 267 112H84L6 155L44 112H34C29 112 26 109 26 102V16C26 9 29 6 34 6Z" fill="#2d384c" stroke="#fff" stroke-width="8" paint-order="stroke"/></svg>
  <p>The mating connector will<br>be automatically selected<br>form the library</p>
</aside>
</body>
</html>
```
FILE: styles.css
```css
* { box-sizing: border-box; }
body { margin: 0; height: 100vh; display: flex; flex-direction: column; overflow: hidden; background: #535353; font: 11px/16px "Noto Sans", "Open Sans", sans-serif; color: #111; }
button { font: inherit; color: inherit; background: none; border: 0; padding: 0; margin: 0; }
h1, h2 { margin: 0; font-size: 11px; font-weight: 400; }
svg { flex: none; display: block; }
.sprite { position: absolute; width: 0; height: 0; }

.titlebar { height: 23px; flex: none; display: flex; align-items: center; background: #0078d7; color: #fff; overflow: hidden; }
.titlebar h1 { white-space: nowrap; }
.titlebar sup { font-size: 8px; line-height: 1px; }
.logo { width: 18px; height: 16px; }
.titlebar .logo { margin: 0 4px 0 -4px; }

.menubar { height: 26px; flex: none; display: flex; align-items: center; background: #535353; color: #fff; }
.menubar .logo { margin: 0 2px 0 1px; }
.menubar button { padding: 0 7px 0 8px; }
.grip { flex: none; width: 3px; height: 16px; background: repeating-linear-gradient(#fff 0 2px, transparent 2px 4px); }
.menubar .grip { width: 2px; }

.toolrow { height: 28px; flex: none; display: flex; gap: 2px; }
.toolbar { flex: none; display: flex; align-items: center; height: 28px; border-bottom: 1px solid #60646c; border-radius: 0 3px 0 0; background: linear-gradient(#ced1d7, #b9bdc5 45%, #9da3ae); overflow: hidden; }
.toolbar > button { width: 25px; height: 24px; display: grid; place-items: center; flex: none; }
.toolbar svg { width: 16px; height: 16px; }
.toolbar svg.wide { width: 18px; }
.toolbar .sep { flex: none; width: 9px; height: 16px; background: linear-gradient(90deg, transparent 3px, #6f747e 3px 4px, #f2f2f4 4px 5px, transparent 5px); }
.toolbar.insert .sep { width: 7px; }
.main { width: 409px; }
.insert { width: 413px; }
.insert > button { width: 26px; }
.insert .grip, .rest .grip { margin: 0 4px 0 1px; width: 2px; }
.insert .grip { margin-right: 3px; }
.view { width: 425px; }
.rest { flex: 1 0 0; }
.toolbar > .more { position: relative; width: 10px; height: 28px; margin-left: auto; background: linear-gradient(#8f949e, #666b76); border-radius: 0 3px 0 0; }
.more::after { content: ""; position: absolute; left: 3px; bottom: 4px; border: 3px solid transparent; border-top-color: #fff; border-bottom: 0; box-shadow: 0 -3px 0 -1px #fff; }
.toolbar > .on { background: linear-gradient(#fcdcaa, #fcc987 50%, #fee295); outline: 1px solid #ffe7ac; outline-offset: -1px; }
.grey { color: #9b9b9b; }
.spin { display: flex; flex: none; width: 64px; height: 16px; margin: 0 1px 0 2px; background: #fff; }
.spin input { flex: 1; min-width: 0; border: 0; padding: 0 0 0 3px; font: 11px/16px "Noto Sans", sans-serif; background: none; color: #111; }
.steps { width: 15px; display: grid; gap: 1px; background: #ededed; }
.steps button { display: grid; place-items: center; }
.steps button::after, .caret::after { content: ""; border: 3px solid transparent; border-bottom-color: #555; border-top: 0; }
.steps .down::after, .caret::after { border-bottom: 0; border-top: 3px solid #555; }
.toolbar > .caret { width: 12px; }
.rest .spin { margin: 0 5px 0 4px; }
.linepick { position: relative; flex: 0 0 116px; height: 20px; background: #fff; }
.linepick::before { content: ""; position: absolute; left: 7px; right: 21px; top: 9px; height: 1px; background: #000; }
.linepick::after { content: ""; position: absolute; right: 5px; top: 9px; border: 3px solid transparent; border-top-color: #444; border-bottom: 0; }
.linepick select { appearance: none; width: 100%; height: 100%; border: 1px solid #fff; border-radius: 0; padding: 0; background: linear-gradient(#c5c9cf, #a9aeb7) right / 13px 100% no-repeat; }

main { flex: 1; min-height: 0; display: flex; }
.sidetabs { width: 18px; flex: none; padding-top: 4px; display: flex; flex-direction: column; gap: 14px; overflow: hidden; }
.sidetabs button { writing-mode: vertical-rl; width: 16px; flex: none; display: flex; align-items: center; gap: 10px; padding: 5px 2px 0 0; font-size: 12px; line-height: 13px; color: #7b7461; white-space: nowrap; background: linear-gradient(90deg, #fdeebf, #fdd67c); border: 1px solid #a6a18e; border-left: 0; }
.sidetabs svg { width: 12px; height: 12px; }
.cabling { height: 125px; }
.pin { height: 100px; }
.connection { height: 145px; }
.builder { height: 113px; }

.docks { width: 322px; flex: none; display: flex; flex-direction: column; gap: 6px; }
.devices { flex: none; height: 512px; display: flex; flex-direction: column; background: #e9eaec; }
.dockhead { height: 21px; flex: none; display: flex; align-items: center; gap: 8px; padding: 0 5px 0 4px; color: #444; }
.dockhead h2 { flex: 1; }
.dockhead svg { width: 9px; height: 9px; }
.treebox { flex: 1; margin-left: 1px; border: 2px solid #fcd591; background: #fff; display: flex; flex-direction: column; justify-content: space-between; overflow: hidden; }
table { width: 100%; border-collapse: collapse; table-layout: fixed; border-bottom: 1px solid #999; font: 11px/16px Roboto, sans-serif; }
th { height: 20px; padding: 0 0 0 6px; font-weight: 400; text-align: left; white-space: nowrap; border-left: 1px solid #e2e2e2; }
th:first-child, td:first-child { border-left: 0; }
.c1 { width: 149px; }
.c2 { width: 101px; }
td { height: 16px; padding: 0 0 0 6px; border-left: 1px solid #999; white-space: nowrap; overflow: hidden; }
td:first-child { padding: 0; }
.node { height: 16px; display: flex; align-items: center; background-repeat: no-repeat; }
.node span, .node b { padding: 0 3px; }
.node b { font-size: 12px; }
.ex { width: 9px; height: 9px; margin-right: 8px; }
.ic { width: 16px; height: 16px; margin-right: 2px; }
.l0 { padding-left: 4px; }
.l1 { padding-left: 24px; }
.l2 { padding-left: 44px; }
.l0 { background-image: repeating-linear-gradient(90deg, #999 0 1px, transparent 1px 2px); background-size: 10px 1px; background-position: 10px 8px; }
.l1 { background-image: repeating-linear-gradient(#999 0 1px, transparent 1px 2px), repeating-linear-gradient(90deg, #999 0 1px, transparent 1px 2px); background-size: 1px 16px, 10px 1px; background-position: 28px 0, 30px 8px; }
.l2 { background-image: repeating-linear-gradient(#999 0 1px, transparent 1px 2px), repeating-linear-gradient(#999 0 1px, transparent 1px 2px), repeating-linear-gradient(90deg, #999 0 1px, transparent 1px 2px); background-size: 1px 16px, 1px 16px, 10px 1px; background-position: 28px 0, 48px 0, 50px 8px; }
.l1.last { background-size: 1px 8px, 10px 1px; }
.l2.last { background-size: 1px 16px, 1px 8px, 10px 1px; }
.selected td:nth-child(n+2), .selected span { background: #0078d7; color: #fff; outline: 1px dotted #e08a2c; outline-offset: -1px; }
.selected span { flex: 1; }
.hscroll { height: 15px; display: flex; }
.hscroll button { width: 17px; display: grid; place-items: center; background: #f0f0f0; }
.hscroll svg { width: 7px; height: 8px; }
.hscroll i { flex: 1; background: #cdcdcd; }
.booktabs { height: 22px; flex: none; display: flex; gap: 1px; padding: 0 1px; background: #a9aeb8; border-top: 1px solid #555; }
.booktabs button { width: 58px; display: flex; align-items: center; gap: 3px; padding-left: 4px; background: linear-gradient(#c9ddf6, #e6f1fd); border: 1px solid #777; border-top: 0; border-radius: 0 0 3px 3px; }
.booktabs svg { width: 16px; height: 16px; }
.booktabs .variant { width: 66px; background: linear-gradient(#bfd592, #dcecba); }

.component { flex: 1; background: #f0f0f0; }
.component h2 { height: 20px; padding: 2px 4px; background: #9d9d9d; color: #444; }
form { display: grid; grid-template-columns: 92px 140px; grid-auto-rows: 22px; gap: 2px 0; align-items: center; padding: 13px 0 0 12px; font-family: Roboto, sans-serif; }
label { white-space: nowrap; }
.combo { position: relative; height: 20px; }
.combo select { appearance: none; width: 100%; height: 100%; border: 1px solid #7a7a7a; border-radius: 0; padding: 0 2px; font: 11px/16px Roboto, sans-serif; color: #fff; background: linear-gradient(#0078d7, #0078d7) 1px 2px / 24px 14px no-repeat #fff; }
.combo::after { content: ""; position: absolute; right: 6px; top: 5px; width: 6px; height: 6px; border: solid #444; border-width: 0 1px 1px 0; transform: rotate(45deg); }

.sheet { flex: 1; min-width: 0; margin: 1px 0 0 4px; border: solid #777; border-width: 1px 0 0 2px; box-shadow: inset 1px 0 #000; background: #fff; padding-left: 1px; }
.drawing { width: 100%; height: 100%; }
.cad text { font: bold 13px "Liberation Mono", monospace; white-space: pre; }
.balloon { font: 13px "DejaVu Sans Mono", monospace; text-anchor: middle; }

.context { position: absolute; left: 130px; top: 237px; width: 326px; padding: 2px 0 1px; border: 1px solid #858585; background: linear-gradient(90deg, #eee 25px, #c6c6c6 25px 26px, #fafafa 26px); box-shadow: 2px 2px 0 #8c8c8c, 3px 3px 1px #999; display: flex; flex-direction: column; font-size: 11px; color: #444; }
.context button { height: 24px; display: flex; align-items: center; text-align: left; padding-right: 13px; }
.context i { width: 31px; padding-left: 5px; }
.context svg { width: 16px; height: 16px; }
.context span { flex: 1; }
.context kbd { font: inherit; }
.context hr { width: 292px; height: 1px; margin: 3px 1px 4px auto; border: 0; background: #c6c6c6; }
.context .sub { padding-right: 4px; }
.sub::after { content: ""; border: 4px solid transparent; border-left-color: #333; border-right: 0; }

.pointer { position: absolute; left: 130px; top: 236px; width: 110px; height: 120px; filter: drop-shadow(3px 1px 3px #0008); pointer-events: none; }
.callout { position: absolute; left: 317px; top: 193px; width: 284px; height: 162px; }
.callout svg { position: absolute; width: 100%; height: 100%; }
.callout p { position: relative; margin: 12px 5px 0 26px; text-align: center; font: 18px/24px "Noto Sans", sans-serif; color: #fff; white-space: nowrap; }
```
